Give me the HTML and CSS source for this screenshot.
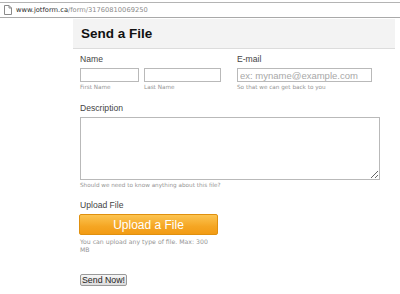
FILE: index.html
```html
<!DOCTYPE html>
<html lang="en">
<head>
    <meta charset="UTF-8">
    <meta name="viewport" content="width=device-width, initial-scale=1.0">
    <title>Send a File</title>
    <link rel="stylesheet" href="styles.css">
</head>
<body>
    <div class="address-bar">
        <svg class="page-icon" width="8" height="10" viewBox="0 0 8 10">
            <path d="M0.5 0.5 H5 L7.5 3 V9.5 H0.5 Z" fill="#fff" stroke="#8a8a8a"/>
            <path d="M5 0.5 V3 H7.5" fill="none" stroke="#8a8a8a"/>
        </svg>
        <span class="url"><span class="url-host">www.jotform.ca</span>/form/31760810069250</span>
    </div>

    <div class="container">
        <div class="form-header">Send a File</div>
        <form class="form-body">
            <div class="row">
                <div class="field">
                    <label class="field-label">Name</label>
                    <div class="name-inputs">
                        <div class="sub-field">
                            <input type="text" class="input input-first">
                            <span class="sublabel">First Name</span>
                        </div>
                        <div class="sub-field">
                            <input type="text" class="input input-last">
                            <span class="sublabel">Last Name</span>
                        </div>
                    </div>
                </div>
                <div class="field">
                    <label class="field-label">E-mail</label>
                    <input type="text" class="input input-email" placeholder="ex: myname@example.com">
                    <span class="sublabel">So that we can get back to you</span>
                </div>
            </div>

            <div class="field field-description">
                <label class="field-label">Description</label>
                <textarea class="textarea"></textarea>
                <span class="sublabel">Should we need to know anything about this file?</span>
            </div>

            <div class="field field-upload">
                <label class="field-label">Upload File</label>
                <button type="button" class="btn-upload">Upload a File</button>
                <span class="sublabel sublabel-upload">You can upload any type of file. Max: 300<br>MB</span>
            </div>

            <button type="button" class="btn-submit">Send Now!</button>
        </form>
    </div>
</body>
</html>
```

FILE: styles.css
```css
body {
    margin: 0;
    font-family: 'Liberation Sans', Arial, sans-serif;
    background-color: #ffffff;
}
.address-bar {
    display: flex;
    align-items: center;
    margin-top: 2px;
    height: 14px;
    border-top: 1px solid #b4b4b4;
    border-bottom: 1px solid #a9a9a9;
    padding-left: 4px;
}
.page-icon {
    flex: none;
    margin-right: 4px;
}
.url {
    font-family: 'DejaVu Sans', Verdana, sans-serif;
    font-size: 6.7px;
    color: #8a8a8a;
}
.url-host {
    color: #2a2a2a;
}
.container {
    margin-top: 1px;
    margin-left: 73px;
    width: 322px;
}
.form-header {
    height: 29px;
    line-height: 30px;
    padding-left: 8px;
    background-color: #f3f3f3;
    border-bottom: 1px solid #dcdcdc;
    font-size: 13.5px;
    font-weight: bold;
    color: #111111;
}
.form-body {
    padding: 5px 0 0 7px;
    display: flex;
    flex-direction: column;
    align-items: flex-start;
}
.row {
    display: flex;
    gap: 16px;
}
.field {
    display: flex;
    flex-direction: column;
    align-items: flex-start;
}
.field-label {
    font-size: 8.6px;
    line-height: 11px;
    color: #444444;
    margin-bottom: 3px;
}
.name-inputs {
    display: flex;
    gap: 5px;
}
.sub-field {
    display: flex;
    flex-direction: column;
}
.input {
    box-sizing: border-box;
    height: 14px;
    margin: 0;
    padding: 0 2px;
    border: 1px solid #b9b9b9;
    background-color: #ffffff;
    font-family: 'Liberation Sans', Arial, sans-serif;
    font-size: 9.5px;
}
.input::placeholder {
    color: #a8a8a8;
}
.input-first {
    width: 59px;
}
.input-last {
    width: 77px;
}
.input-email {
    width: 135px;
}
.sublabel {
    margin-top: 1px;
    font-family: 'DejaVu Sans', Verdana, sans-serif;
    font-size: 5.7px;
    line-height: 9px;
    color: #959595;
    white-space: nowrap;
}
.field-description {
    margin-top: 11px;
}
.textarea {
    box-sizing: border-box;
    width: 300px;
    height: 63px;
    margin: 0;
    border: 1px solid #b9b9b9;
    padding: 2px;
}
.field-upload {
    margin-top: 10px;
}
.btn-upload {
    box-sizing: border-box;
    width: 139px;
    height: 21px;
    margin-left: -1px;
    padding: 0;
    border: 1px solid #e0900e;
    border-radius: 2px;
    background: linear-gradient(#fcc451, #f5a623 60%, #f29b14);
    color: #ffffff;
    font-family: 'Liberation Sans', Arial, sans-serif;
    font-size: 12px;
    cursor: pointer;
}
.sublabel-upload {
    line-height: 8px;
    margin-top: 3px;
    font-size: 6.2px;
}
.btn-submit {
    box-sizing: border-box;
    margin-top: 20px;
    width: 47px;
    height: 12px;
    padding: 0;
    border: 1px solid #9a9a9a;
    border-radius: 2px;
    background: linear-gradient(#f6f6f6, #dcdcdc);
    color: #222222;
    font-family: 'Liberation Sans', Arial, sans-serif;
    font-size: 8.8px;
    line-height: 10px;
    cursor: pointer;
}
```
